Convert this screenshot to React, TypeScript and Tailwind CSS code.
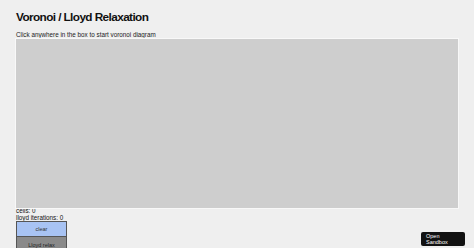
import React from "react";

export default function App() {
  return (
    <div
      className="relative min-h-[248px] w-full overflow-hidden bg-[#efefef] pl-[16px] pr-[16px] text-[#111]"
      style={{ fontFamily: '"Liberation Sans", Arial, sans-serif' }}
    >
      <div className="pt-[9.5px] h-[31px]">
        <h1 className="text-[11.8px] leading-[14px] font-bold tracking-[-0.6px] text-[#111]">Voronoi / Lloyd Relaxation</h1>
      </div>
      <p className="text-[6.3px] leading-[8px] text-[#222]">Click anywhere in the box to start voronoi diagram</p>
      <div className="h-[169px] w-[442px] bg-[#cecece] outline outline-1 outline-[#f8f8f8]" />
      <div className="text-[6.3px] leading-[6.5px] text-[#111]">
        <div>cells: 0</div>
        <div>lloyd iterations: 0</div>
      </div>
      <div className="flex flex-col w-[51px]">
        <button className="h-[16px] w-[51px] border border-[#555] bg-[#a8c3f3] text-[5.5px] leading-[14px] text-[#333] text-center">
          clear
        </button>
        <button className="h-[16px] w-[51px] border border-t-0 border-[#555] bg-[#8a8a8a] text-[5.5px] leading-[14px] text-[#222] text-center">
          Lloyd relax
        </button>
      </div>
      <div className="absolute right-[9px] bottom-[7px] w-[44px] h-[14px] rounded-[2px] bg-[#111] px-[5px] pt-[1px] text-[5.5px] leading-[6px] text-white">
        <div>Open</div>
        <div>Sandbox</div>
      </div>
    </div>
  );
}
